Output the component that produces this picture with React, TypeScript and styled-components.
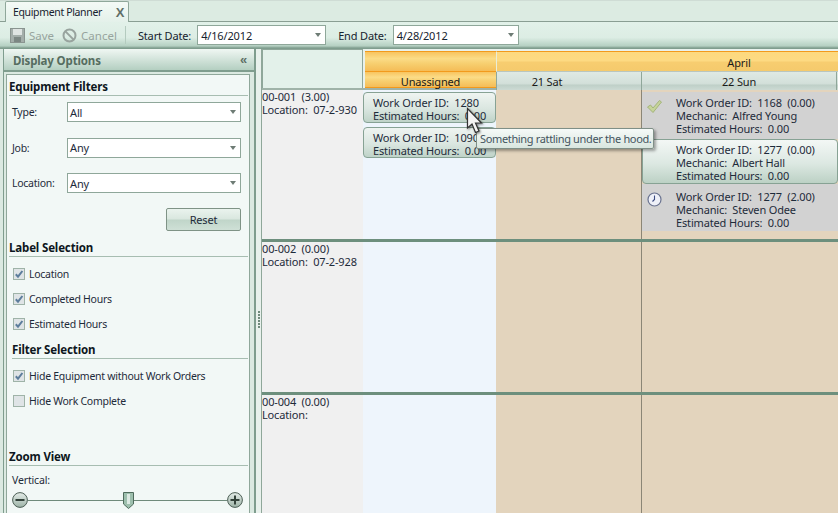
import React from 'react';
import styled, { createGlobalStyle } from 'styled-components';

const GlobalStyle = createGlobalStyle`
  html, body {
    margin: 0;
    padding: 0;
    height: 100%;
    overflow: hidden;
  }
  body {
    font-family: "Noto Sans", "Liberation Sans", sans-serif;
    font-size: 11px;
    letter-spacing: -0.15px;
    color: #1e2b3a;
  }
  #root {
    height: 100%;
  }
`;

const Page = styled.div`
  position: relative;
  width: 838px;
  height: 513px;
  overflow: hidden;
  background: #dfeee5;
  display: flex;
  flex-direction: column;
`;

const TabStrip = styled.div`
  height: 22px;
  display: flex;
  align-items: flex-end;
  padding-left: 5px;
  background: #dcebe2;
  border-top: 1px solid #cfdcd5;
  box-sizing: border-box;
  border-bottom: 1px solid #8a9e93;
`;

const Tab = styled.div`
  width: 124px;
  height: 21px;
  margin-bottom: -1px;
  box-sizing: border-box;
  display: flex;
  align-items: center;
  justify-content: space-between;
  padding: 0 4px 0 7px;
  background: linear-gradient(#f4faf6, #e4f1ea);
  border: 1px solid #8fa79a;
  border-bottom: none;
  border-radius: 2px 2px 0 0;
  color: #16222e;
  white-space: nowrap;
  font-size: 10.5px;
  letter-spacing: -0.35px;
`;

const TabClose = styled.span`
  font-family: "Liberation Sans", sans-serif;
  font-weight: bold;
  font-size: 13px;
  color: #5f6f68;
`;

const Toolbar = styled.div`
  height: 26px;
  display: flex;
  align-items: center;
  padding-left: 10px;
  background: linear-gradient(#e2f1e9 0%, #dcede4 60%, #b5d0c2 92%, #7f9d8e 100%);
`;

const ToolButton = styled.span`
  display: flex;
  align-items: center;
  gap: 4px;
  color: #97a49d;
  margin-right: 8px;
  font-size: 11.5px;
  letter-spacing: 0;
`;

const ToolDivider = styled.span`
  width: 1px;
  height: 18px;
  background: #b4cbbf;
  margin: 0 12px 0 0;
`;

const DateLabel = styled.span<{ $gap: number }>`
  color: #16222e;
  margin-right: 6px;
  margin-left: ${(p) => p.$gap}px;
`;

const DateBox = styled.div<{ $width: number }>`
  width: ${(p) => p.$width}px;
  height: 20px;
  box-sizing: border-box;
  background: #fff;
  border: 1px solid #8fa79a;
  display: flex;
  align-items: center;
  justify-content: space-between;
  padding: 0 4px 0 3px;
  color: #16222e;
`;

const Caret = styled.span`
  width: 0;
  height: 0;
  border-left: 3.5px solid transparent;
  border-right: 3.5px solid transparent;
  border-top: 4px solid #6e7c75;
`;

const Body = styled.div`
  flex: 1;
  display: flex;
  min-height: 0;
  background: #dbe9e1;
  border-top: 1px solid #7f9d8e;
  padding-left: 3px;
`;

const Side = styled.aside`
  width: 253px;
  flex: none;
  box-sizing: border-box;
  border-left: 1px solid #7f9d8e;
  border-right: 2px solid #7f9d8e;
  display: flex;
  flex-direction: column;
`;

const SideHeader = styled.div`
  height: 23px;
  flex: none;
  box-sizing: border-box;
  display: flex;
  align-items: center;
  justify-content: space-between;
  padding: 1px 7px 0 9px;
  background: linear-gradient(#f0f7f3, #b4cfc1);
  border-bottom: 2px solid #7f9d8e;
  color: #566d60;
  font-weight: 700;
  font-size: 11.5px;
`;

const Collapse = styled.span`
  font-family: "Liberation Sans", sans-serif;
  font-size: 13px;
  color: #5d6f66;
  position: relative;
  top: -1px;
`;

const SidePane = styled.div`
  flex: 1;
  margin: 2px 4px 0 2px;
  box-sizing: border-box;
  border: 1px solid #8fa79a;
  border-bottom: none;
  background: #f2f8f6;
  padding-top: 3px;
`;

const Spacer = styled.div<{ $h: number }>`
  height: ${(p) => p.$h}px;
`;

const Heading = styled.div<{ $inset?: number }>`
  margin-left: ${(p) => p.$inset ?? 2}px;
  margin-right: 1px;
  height: 17px;
  line-height: 17px;
  border-bottom: 1px solid #a7bdb1;
  font-weight: 700;
  font-size: 11.5px;
  color: #0d1620;
`;

const Field = styled.div`
  display: flex;
  align-items: center;
  height: 20px;
  margin: 0 0 15.5px 5px;
`;

const FieldLabel = styled.span`
  width: 55px;
  flex: none;
  font-size: 10.5px;
  letter-spacing: -0.27px;
`;

const Select = styled.div`
  width: 174px;
  height: 20px;
  box-sizing: border-box;
  background: #fff;
  border: 1px solid #8fa79a;
  display: flex;
  align-items: center;
  justify-content: space-between;
  padding: 0 4px 0 2px;
`;

const ResetRow = styled.div`
  display: flex;
  justify-content: flex-end;
  padding-right: 8px;
  margin-top: -0.5px;
`;

const ResetButton = styled.button`
  width: 75px;
  height: 23px;
  padding: 0;
  font: inherit;
  letter-spacing: inherit;
  color: #1e2b3a;
  border: 1px solid #7f9386;
  border-radius: 2px;
  background: linear-gradient(#eaf3ee 0%, #d9e7df 48%, #c0d5c9 52%, #cfe0d6 100%);
`;

const CheckRow = styled.div`
  display: flex;
  align-items: center;
  gap: 4px;
  height: 13px;
  margin-left: 6px;
  font-size: 10.5px;
  letter-spacing: -0.27px;
`;

const Box = styled.span`
  width: 12px;
  height: 12px;
  flex: none;
  box-sizing: border-box;
  border: 1px solid #9fb3a8;
  background: #dfe4e6;
  display: flex;
  align-items: center;
  justify-content: center;
`;

const CheckGroup = styled.div`
  display: flex;
  flex-direction: column;
  gap: 12px;
`;

const VerticalLabel = styled.div`
  margin: 6.5px 0 0 5px;
  line-height: 15px;
  font-size: 10.5px;
`;

const SliderRow = styled.div`
  display: flex;
  align-items: center;
  margin: 4px 0 0 5px;
  width: 231px;
`;

const SliderLine = styled.span<{ $grow: number }>`
  flex: ${(p) => p.$grow};
  height: 1px;
  background: #6f8a7b;
`;

const Splitter = styled.div`
  width: 6px;
  flex: none;
  display: flex;
  flex-direction: column;
  align-items: center;
  justify-content: center;
  gap: 1px;
  padding-top: 76px;
  background: #e8f1ec;
  border-right: 1px solid #8fa79a;
  box-sizing: border-box;
`;

const Grip = styled.span`
  width: 2px;
  height: 2px;
  background: #6f8a7b;
`;

const Planner = styled.div`
  flex: 1;
  min-width: 0;
  display: flex;
  flex-direction: column;
  background: #f0f0f0;
`;

const HeaderGrid = styled.div`
  height: 41px;
  flex: none;
  box-sizing: border-box;
  display: grid;
  grid-template-columns: 101px 133px 1fr;
  grid-template-rows: 23px 16px;
  background: #e8f1ec;
  border-bottom: 2px solid #9fb3a8;
`;

const Corner = styled.div`
  grid-row: 1 / 3;
  background: #e3f1ea;
  border: 1px solid #8fa79a;
  border-bottom: none;
`;

const Gold = `linear-gradient(#f8c45f 0%, #fbdc87 35%, #f7cf70 60%, #f4bc57 100%)`;
const PaleGold = `linear-gradient(#fdd97f 0%, #fdda82 45%, #f7cd70 55%, #f5ca6c 100%)`;

const MonthBlank = styled.div`
  margin: 2px 0 0 2px;
  background: ${Gold};
  border-top: 1px solid #f29a1c;
  border-bottom: 1px solid #f29a1c;
`;

const MonthCell = styled.div`
  margin-top: 2px;
  padding-left: 143px;
  background: ${PaleGold};
  border-top: 1px solid #f29a1c;
  border-bottom: 1px solid #b9c6bf;
  border-left: 1px solid #e9edd8;
  text-align: center;
  line-height: 21px;
  color: #1a1a1a;
`;

const UnassignedHead = styled.div`
  margin-left: 2px;
  background: ${Gold};
  border-bottom: 1px solid #f29a1c;
  text-align: center;
  line-height: 19px;
  color: #1a1a1a;
`;

const DayHeads = styled.div`
  display: grid;
  grid-template-columns: 145px 195px 1fr;
`;

const DayHead = styled.div<{ $shift?: number }>`
  padding-right: ${(p) => p.$shift ?? 0}px;
  background: linear-gradient(#dfe9e4 0%, #d3e0da 60%, #bfd0c8 70%, #cfdcd6 100%);
  border-left: 1px solid #8fa79a;
  text-align: center;
  line-height: 19px;
  color: #1a1a1a;
`;

const Row = styled.div<{ $height: number; $last?: boolean }>`
  flex: none;
  height: ${(p) => p.$height}px;
  display: grid;
  grid-template-columns: 101px 133px 146px 1fr;
  box-sizing: border-box;
  border-bottom: ${(p) => (p.$last ? 'none' : '3px solid #6d8f7d')};
`;

const RowLabel = styled.div`
  line-height: 13px;
  background: #f0f0f0;
  color: #1e2b3a;
  white-space: pre;
`;

const Unassigned = styled.div`
  background: #eef5fc;
  padding-top: 2px;
  display: flex;
  flex-direction: column;
  gap: 4px;
`;

const Weekend = styled.div`
  background: #e3d4bd;
  border-right: 1px solid #8b8676;
`;

const WeekendSun = styled.div`
  background: #e3d4bd;
  padding-top: 2px;
`;

const OrderCard = styled.div`
  height: 31px;
  box-sizing: border-box;
  padding: 3px 0 0 9px;
  line-height: 13px;
  border: 1px solid #87a294;
  border-radius: 4px;
  background: linear-gradient(#eff4f1 0%, #dae6e0 55%, #bfd3c8 100%);
  color: #1e2b3a;
  white-space: pre;
`;

const Assigned = styled.div<{ $selected?: boolean; $top: number }>`
  height: ${(p) => (p.$selected ? 45 : 47)}px;
  box-sizing: border-box;
  padding: ${(p) => p.$top}px 0 0 ${(p) => (p.$selected ? 33 : 34)}px;
  line-height: 13px;
  white-space: pre;
  position: relative;
  background: ${(p) => (p.$selected ? 'linear-gradient(#f3f7f5 0%, #dce8e2 55%, #bcd1c5 100%)' : '#d2d2d2')};
  border: ${(p) => (p.$selected ? '1px solid #87a294' : 'none')};
  border-radius: ${(p) => (p.$selected ? '4px' : '0')};
`;

const StatusIcon = styled.span<{ $top: number }>`
  position: absolute;
  left: 4px;
  top: ${(p) => p.$top}px;
  width: 17px;
  height: 17px;
`;

const Tooltip = styled.div`
  position: absolute;
  left: 476px;
  top: 128px;
  width: 178px;
  height: 21px;
  box-sizing: border-box;
  padding-left: 3px;
  line-height: 19px;
  letter-spacing: -0.35px;
  color: #44545e;
  border: 1px solid #7f8f87;
  border-radius: 2px;
  background: linear-gradient(#f6faf8, #d9e6df);
  box-shadow: 2px 2px 3px rgba(0, 0, 0, 0.35);
  white-space: pre;
`;

const Cursor = styled.svg`
  position: absolute;
  left: 466px;
  top: 107px;
  filter: drop-shadow(1px 1px 1px rgba(0, 0, 0, 0.5));
`;

const Cards = [
  { id: '1168', hours: '0.00', mechanic: 'Alfred Young', top: 4 },
  { id: '1277', hours: '0.00', mechanic: 'Albert Hall', top: 3, selected: true },
  { id: '1277', hours: '2.00', mechanic: 'Steven Odee', top: 5.5 },
];

const Tick = () => (
  <svg width="10" height="10" viewBox="0 0 10 10">
    <path d="M1.8 5.2 L4 7.6 L8.4 2" fill="none" stroke="#5d7d9c" strokeWidth="2" />
  </svg>
);

const CheckItem = ({ label, checked = true }: { label: string; checked?: boolean }) => (
  <CheckRow>
    <Box>{checked && <Tick />}</Box>
    {label}
  </CheckRow>
);

const ZoomButton = ({ plus }: { plus?: boolean }) => (
  <svg width="16" height="16" viewBox="0 0 16 16">
    <defs>
      <linearGradient id={plus ? 'zp' : 'zm'} x1="0" y1="0" x2="0" y2="1">
        <stop offset="0" stopColor="#e4ece8" />
        <stop offset="1" stopColor="#9db3a7" />
      </linearGradient>
    </defs>
    <circle cx="8" cy="8" r="7.4" fill={`url(#${plus ? 'zp' : 'zm'})`} stroke="#4d5f56" />
    <rect x="3.5" y="7" width="9" height="2" fill="#33423a" />
    {plus && <rect x="7" y="3.5" width="2" height="9" fill="#33423a" />}
  </svg>
);

const App: React.FC = () => {
  return (
    <Page>
      <GlobalStyle />
      <TabStrip>
        <Tab>
          Equipment Planner
          <TabClose>X</TabClose>
        </Tab>
      </TabStrip>
      <Toolbar>
        <ToolButton>
          <svg width="15" height="15" viewBox="0 0 15 15">
            <rect x="0.5" y="0.5" width="14" height="14" fill="#a4aeaa" stroke="#8a9490" />
            <rect x="3" y="1" width="9" height="6" fill="#dfe4e2" />
            <rect x="4" y="9" width="7" height="5" fill="#7c8783" />
          </svg>
          Save
        </ToolButton>
        <ToolButton>
          <svg width="15" height="15" viewBox="0 0 15 15">
            <circle cx="7.5" cy="7.5" r="6" fill="none" stroke="#98a39e" strokeWidth="2" />
            <path d="M3.4 3.4 L11.6 11.6" stroke="#98a39e" strokeWidth="2" />
          </svg>
          Cancel
        </ToolButton>
        <ToolDivider />
        <DateLabel $gap={0}>Start Date:</DateLabel>
        <DateBox $width={129}>
          4/16/2012
          <Caret />
        </DateBox>
        <DateLabel $gap={12}>End Date:</DateLabel>
        <DateBox $width={126}>
          4/28/2012
          <Caret />
        </DateBox>
      </Toolbar>
      <Body>
        <Side>
          <SideHeader>
            Display Options
            <Collapse>«</Collapse>
          </SideHeader>
          <SidePane>
            <Heading>Equipment Filters</Heading>
            <Spacer $h={6} />
            <Field>
              <FieldLabel>Type:</FieldLabel>
              <Select>
                All
                <Caret />
              </Select>
            </Field>
            <Field>
              <FieldLabel>Job:</FieldLabel>
              <Select>
                Any
                <Caret />
              </Select>
            </Field>
            <Field>
              <FieldLabel>Location:</FieldLabel>
              <Select>
                Any
                <Caret />
              </Select>
            </Field>
            <ResetRow>
              <ResetButton>Reset</ResetButton>
            </ResetRow>
            <Spacer $h={8} />
            <Heading>Label Selection</Heading>
            <Spacer $h={10.5} />
            <CheckGroup>
              <CheckItem label="Location" />
              <CheckItem label="Completed Hours" />
              <CheckItem label="Estimated Hours" />
            </CheckGroup>
            <Spacer $h={10.5} />
            <Heading $inset={5}>Filter Selection</Heading>
            <Spacer $h={10.5} />
            <CheckGroup>
              <CheckItem label="Hide Equipment without Work Orders" />
              <CheckItem label="Hide Work Complete" checked={false} />
            </CheckGroup>
            <Spacer $h={40.5} />
            <Heading>Zoom View</Heading>
            <VerticalLabel>Vertical:</VerticalLabel>
            <SliderRow>
              <ZoomButton />
              <SliderLine $grow={95} />
              <svg width="11" height="17" viewBox="0 0 11 17">
                <path d="M0.5 0.5 H10.5 V12 L5.5 16.5 L0.5 12 Z" fill="#9dbfad" stroke="#4f6b5c" />
                <rect x="4" y="2" width="3" height="10" fill="#dce9e2" />
              </svg>
              <SliderLine $grow={93} />
              <ZoomButton plus />
            </SliderRow>
          </SidePane>
        </Side>
        <Splitter>
          <Grip />
          <Grip />
          <Grip />
          <Grip />
          <Grip />
          <Grip />
        </Splitter>
        <Planner>
          <HeaderGrid>
            <Corner />
            <MonthBlank />
            <MonthCell>April</MonthCell>
            <UnassignedHead>Unassigned</UnassignedHead>
            <DayHeads>
              <DayHead $shift={44}>21 Sat</DayHead>
              <DayHead>22 Sun</DayHead>
              <DayHead />
            </DayHeads>
          </HeaderGrid>
          <Row $height={152}>
            <RowLabel>{'00-001  (3.00)\nLocation:  07-2-930'}</RowLabel>
            <Unassigned>
              <OrderCard>{'Work Order ID:  1280\nEstimated Hours:  0.00'}</OrderCard>
              <OrderCard>{'Work Order ID:  1090\nEstimated Hours:  0.00'}</OrderCard>
            </Unassigned>
            <Weekend />
            <WeekendSun>
              {Cards.map((card, i) => (
                <Assigned key={i} $selected={card.selected} $top={card.top}>
                  {i === 0 && (
                    <StatusIcon $top={6}>
                      <svg width="17" height="17" viewBox="0 0 17 17">
                        <path d="M1.5 9 L4.5 7 L7 10 L13.5 2.5 L15.5 4 L7 14.5 Z" fill="#c6d49a" stroke="#a4b57a" />
                      </svg>
                    </StatusIcon>
                  )}
                  {i === 2 && (
                    <StatusIcon $top={6.5}>
                      <svg width="17" height="17" viewBox="0 0 17 17">
                        <circle cx="8.5" cy="8.5" r="6.5" fill="#eef0f8" stroke="#6a7390" strokeWidth="1.2" />
                        <path d="M8.5 4.5 V8.5 L6.5 10.5" fill="none" stroke="#3b4a80" strokeWidth="1.1" />
                      </svg>
                    </StatusIcon>
                  )}
                  {`Work Order ID:  ${card.id}  (${card.hours})\nMechanic:  ${card.mechanic}\nEstimated Hours:  0.00`}
                </Assigned>
              ))}
            </WeekendSun>
          </Row>
          <Row $height={153}>
            <RowLabel>{'00-002  (0.00)\nLocation:  07-2-928'}</RowLabel>
            <Unassigned />
            <Weekend />
            <WeekendSun />
          </Row>
          <Row $height={153} $last>
            <RowLabel>{'00-004  (0.00)\nLocation:'}</RowLabel>
            <Unassigned />
            <Weekend />
            <WeekendSun />
          </Row>
        </Planner>
      </Body>
      <Tooltip>Something rattling under the hood.</Tooltip>
      <Cursor width="20" height="29" viewBox="0 0 20 29">
        <path
          d="M1.5 1.5 L1.5 21 L6 17 L9.5 25.5 L13 24 L9.5 16 L15.5 16 Z"
          fill="#f4f4f4"
          stroke="#333"
          strokeWidth="1.2"
        />
      </Cursor>
    </Page>
  );
};

export default App;
